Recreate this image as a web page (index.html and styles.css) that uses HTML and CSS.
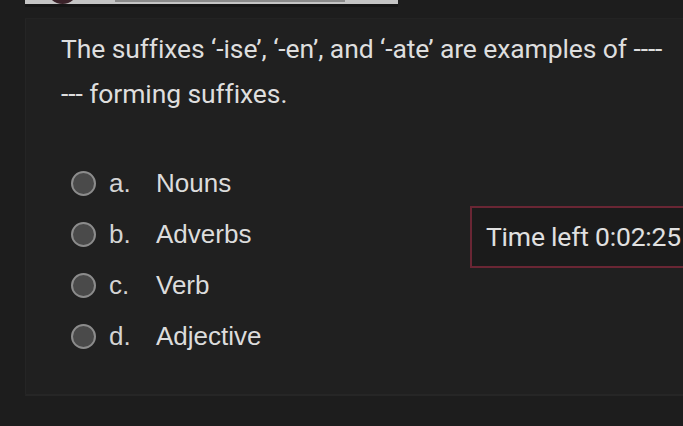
FILE: index.html
```html
<!DOCTYPE html>
<html lang="en">
<head>
    <meta charset="UTF-8">
    <meta name="viewport" content="width=device-width, initial-scale=1.0">
    <title>Quiz question</title>
    <link rel="stylesheet" href="styles.css">
</head>
<body>
    <div class="banner">
        <span class="banner-logo"></span>
        <span class="banner-text"></span>
    </div>

    <div class="card">
        <p class="question">The suffixes ‘-ise’, ‘-en’, and ‘-ate’ are examples of ----<br>--- forming suffixes.</p>

        <div class="body-row">
            <div class="answers">
                <label class="answer"><span class="radio"></span><span class="letter">a.</span><span class="text">Nouns</span></label>
                <label class="answer"><span class="radio"></span><span class="letter">b.</span><span class="text">Adverbs</span></label>
                <label class="answer"><span class="radio"></span><span class="letter">c.</span><span class="text">Verb</span></label>
                <label class="answer"><span class="radio"></span><span class="letter">d.</span><span class="text">Adjective</span></label>
            </div>
            <div class="timer">Time left 0:02:25</div>
        </div>
    </div>
</body>
</html>
```

FILE: styles.css
```css
body {
    margin: 0;
    background: #1d1d1d;
    color: #dcdcdc;
    font-family: Roboto, 'Liberation Sans', sans-serif;
    overflow: hidden;
    height: 426px;
}
.banner {
    margin-left: 25px;
    width: 373px;
    height: 4px;
    background: #c4c4c4;
    border-bottom: 3px solid #151515;
    position: relative;
    overflow: hidden;
}
.banner-logo {
    position: absolute;
    left: 22px;
    top: -26px;
    width: 31px;
    height: 30px;
    border-radius: 50%;
    background: #3a2229;
}
.banner-text {
    position: absolute;
    left: 90px;
    top: 0;
    width: 230px;
    height: 2px;
    background: #8a8a8a;
}
.card {
    margin: 11px 0 0 25px;
    height: 378px;
    background: #202020;
    border-left: 1px solid #252525;
    border-top: 1px solid #232323;
    border-bottom: 2px solid #262626;
    padding: 0 0 0 35px;
    box-sizing: border-box;
    overflow: hidden;
}
.question {
    margin: 0;
    padding-top: 7px;
    font-size: 26.5px;
    line-height: 45px;
    letter-spacing: -0.1px;
    color: #dedede;
}
.body-row {
    display: flex;
    align-items: flex-start;
    margin-top: 52px;
}
.answers {
    flex-shrink: 0;
    display: flex;
    flex-direction: column;
    gap: 21px;
    padding-left: 10px;
    width: 399px;
    font-family: 'Liberation Sans', Arial, sans-serif;
    font-size: 26px;
}
.answer {
    display: flex;
    align-items: center;
    height: 30px;
}
.radio {
    width: 21px;
    height: 21px;
    border-radius: 50%;
    background: #4a4a4a;
    border: 2px solid #8c8c8c;
    margin-right: 13px;
}
.letter {
    width: 47px;
    color: #d4d4d4;
}
.text {
    color: #dcdcdc;
}
.timer {
    flex-shrink: 0;
    margin-top: 38px;
    width: 220px;
    height: 62px;
    box-sizing: border-box;
    border: 2px solid #6a2634;
    background: #1b1b1b;
    padding-left: 14px;
    font-size: 26.5px;
    line-height: 58px;
    white-space: nowrap;
    letter-spacing: -0.2px;
    color: #e0e0e0;
}
```
